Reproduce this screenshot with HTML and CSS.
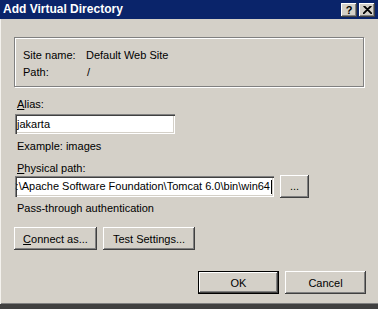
FILE: index.html
```html
<!DOCTYPE html>
<html>
<head>
<meta charset="utf-8">
<title>Add Virtual Directory</title>
<link rel="stylesheet" href="styles.css">
</head>
<body>
<div class="window">
  <div class="titlebar">
    <span class="title">Add Virtual Directory</span>
    <div class="caption-btns">
      <span class="cbtn help">?</span>
      <span class="cbtn close"><svg width="9" height="8" viewBox="0 0 9 8"><path d="M0.5 0 L8.5 8 M1.5 0 L9.5 8 M8.5 0 L0.5 8 M7.5 0 L-0.5 8" stroke="#000" stroke-width="1.1" fill="none"/></svg></span>
    </div>
  </div>
  <div class="content">
    <div class="group">
      <div class="row"><span class="key">Site name:</span><span>Default Web Site</span></div>
      <div class="row"><span class="key">Path:</span><span class="slash">/</span></div>
    </div>
    <div class="label alias-label"><u>A</u>lias:</div>
    <div class="input alias">jakarta</div>
    <div class="label hint">Example: images</div>
    <div class="label phys-label"><u>P</u>hysical path:</div>
    <div class="path-row">
      <div class="input path"><span class="path-text">C:\Apache Software Foundation\Tomcat 6.0\bin\win64</span><span class="caret"></span></div>
      <div class="btn browse">...</div>
    </div>
    <div class="label pass">Pass-through authentication</div>
    <div class="btn-row">
      <div class="btn connect"><span><u>C</u>onnect as...</span></div>
      <div class="btn test">Test Settings...</div>
    </div>
    <div class="footer">
      <div class="btn default">OK</div>
      <div class="btn cancel">Cancel</div>
    </div>
  </div>
</div>
</body>
</html>
```
FILE: styles.css
```css
html, body {
  margin: 0;
  padding: 0;
}
body {
  width: 378px;
  height: 309px;
  overflow: hidden;
  background: #d4d0c8;
  font-family: "Liberation Sans", Arial, sans-serif;
  font-size: 11px;
  color: #000;
}
.window {
  width: 378px;
  height: 309px;
  display: flex;
  flex-direction: column;
  box-sizing: border-box;
  border-bottom: 5px solid #404040;
}
.titlebar {
  height: 19px;
  flex: none;
  background: #0a246a;
  color: #fff;
  font-weight: bold;
  display: flex;
  align-items: center;
  justify-content: space-between;
  padding: 0 3px 0 3px;
}
.title {
  line-height: 19px;
  font-size: 12px;
}
.caption-btns {
  display: flex;
  gap: 2px;
}
.cbtn {
  width: 16px;
  height: 14px;
  box-sizing: border-box;
  background: #d4d0c8;
  color: #000;
  display: flex;
  align-items: center;
  justify-content: center;
  box-shadow: inset -1px -1px #404040, inset 1px 1px #fff, inset -2px -2px #808080, inset 2px 2px #d4d0c8;
  font-size: 11px;
  font-weight: bold;
  line-height: 14px;
}
.cbtn svg {
  display: block;
}
.content {
  flex: 1;
  padding: 18px 12px 0 14px;
  box-shadow: inset 1px 0 #f4f2ee, inset 0 -1px #808080;
}
.group {
  width: 350px;
  height: 50px;
  box-sizing: border-box;
  border: 1px solid #808080;
  box-shadow: inset 1px 1px #fff, 1px 1px #fff;
  padding: 9px 0 0 8px;
}
.row {
  display: flex;
  line-height: 17px;
}
.key {
  width: 63px;
}
.slash {
  padding-left: 1px;
}
.label {
  line-height: 14px;
  padding-left: 3px;
}
.alias-label {
  margin-top: 10px;
}
.input {
  background: #fff;
  box-sizing: border-box;
  margin-left: 1px;
  box-shadow: inset 1px 1px #808080, inset 2px 2px #404040, inset -1px -1px #fff, inset -2px -2px #d4d0c8;
  padding: 2px 2px 0 2px;
  line-height: 16px;
  white-space: nowrap;
  overflow: hidden;
}
.alias {
  width: 160px;
  height: 20px;
  margin-top: 3px;
}
.hint {
  margin-top: 5px;
}
.phys-label {
  margin-top: 8px;
}
.path-row {
  display: flex;
  align-items: center;
  gap: 6px;
}
.path {
  width: 259px;
  height: 21px;
  display: flex;
  justify-content: flex-end;
  align-items: flex-start;
  padding: 2px 2px 0 2px;
  line-height: 17px;
}
.path-text {
  flex: none;
}
.caret {
  flex: none;
  width: 1px;
  height: 14px;
  margin: 2px 0 0 1px;
  background: #000;
}
.btn {
  background: #d4d0c8;
  box-sizing: border-box;
  height: 23px;
  display: flex;
  align-items: center;
  justify-content: center;
  box-shadow: inset -1px -1px #404040, inset 1px 1px #fff, inset -2px -2px #808080, inset 2px 2px #d4d0c8;
  white-space: nowrap;
}
.browse {
  width: 29px;
  padding-bottom: 2px;
}
.pass {
  margin-top: 3px;
}
.btn-row {
  display: flex;
  gap: 6px;
  margin-top: 12px;
}
.connect {
  width: 83px;
}
.test {
  width: 92px;
}
.footer {
  display: flex;
  justify-content: flex-end;
  gap: 6px;
  margin-top: 21px;
}
.footer .btn {
  width: 81px;
}
.btn.default {
  border: 1px solid #000;
}
```
